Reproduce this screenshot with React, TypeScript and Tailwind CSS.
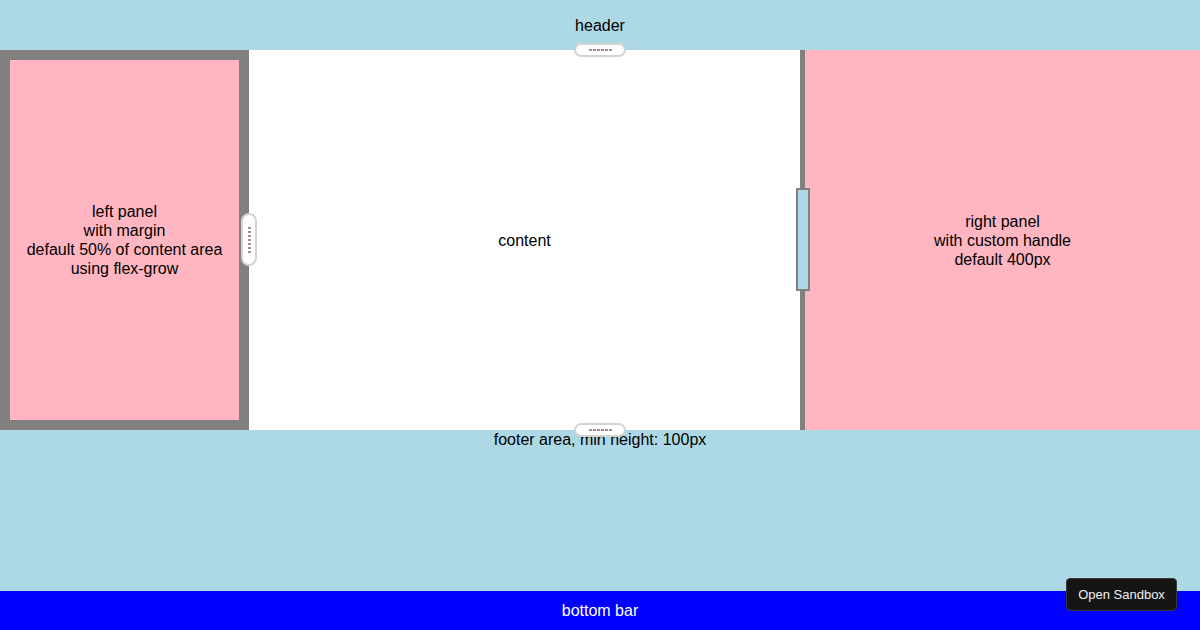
export default function App() {
  const dots = [0, 1, 2, 3, 4, 5];
  return (
    <div className="relative flex h-[630px] w-[1200px] flex-col overflow-hidden font-['Liberation_Sans',Arial,sans-serif] text-[16px] leading-[19px] text-black">
      {/* header */}
      <div className="flex h-[50px] items-center justify-center bg-[#add8e6]">header</div>

      {/* middle row */}
      <div className="relative flex h-[380px]">
        {/* left panel */}
        <div className="relative w-[249px] bg-[#808080] p-[10px]">
          <div className="flex h-full items-center justify-center bg-[#ffb6c1] text-center">
            <div>
              left panel
              <br />
              with margin
              <br />
              default 50% of content area
              <br />
              using flex-grow
            </div>
          </div>
          <div className="absolute right-[-8px] top-[163px] z-10 flex h-[53px] w-[16px] flex-col items-center justify-center gap-[2px] rounded-full border-2 border-[#d4d4d4] bg-white">
            {[0, 1, 2, 3, 4, 5, 6].map((i) => (
              <span key={i} className="h-[2px] w-[3px] bg-[#a88a8f]" />
            ))}
          </div>
        </div>

        {/* content */}
        <div className="flex flex-1 items-center justify-center bg-white">content</div>

        {/* custom handle */}
        <div className="relative w-[5px] bg-[#808080]">
          <div className="absolute left-[-4px] top-[138px] h-[103px] w-[14px] border-2 border-[#808080] bg-[#add8e6]" />
        </div>

        {/* right panel */}
        <div className="flex w-[395px] items-center justify-center bg-[#ffb6c1] text-center">
          <div>
            right panel
            <br />
            with custom handle
            <br />
            default 400px
          </div>
        </div>

        {/* top handle */}
        <div className="absolute left-[574px] top-[-7px] z-10 flex h-[14px] w-[52px] items-center justify-center gap-[1px] rounded-full border-2 border-[#d4d4d4] bg-white">
          {dots.map((i) => (
            <span key={i} className="h-[2px] w-[3px] bg-[#a88a8f]" />
          ))}
        </div>

        {/* bottom handle */}
        <div className="absolute bottom-[-7px] left-[574px] z-10 flex h-[14px] w-[52px] items-center justify-center gap-[1px] rounded-full border-2 border-[#d4d4d4] bg-white">
          {dots.map((i) => (
            <span key={i} className="h-[2px] w-[3px] bg-[#a88a8f]" />
          ))}
        </div>
      </div>

      {/* footer */}
      <div className="flex h-[161px] justify-center bg-[#add8e6]">footer area, min height: 100px</div>

      {/* bottom bar */}
      <div className="flex h-[39px] items-center justify-center bg-[#0000ff] text-white">bottom bar</div>

      <button className="absolute bottom-[19px] right-[23px] h-[33px] w-[111px] rounded-[4px] border border-[#3a3a3a] bg-[#151515] text-[13px] text-[#f0f0f0]">
        Open Sandbox
      </button>
    </div>
  );
}
